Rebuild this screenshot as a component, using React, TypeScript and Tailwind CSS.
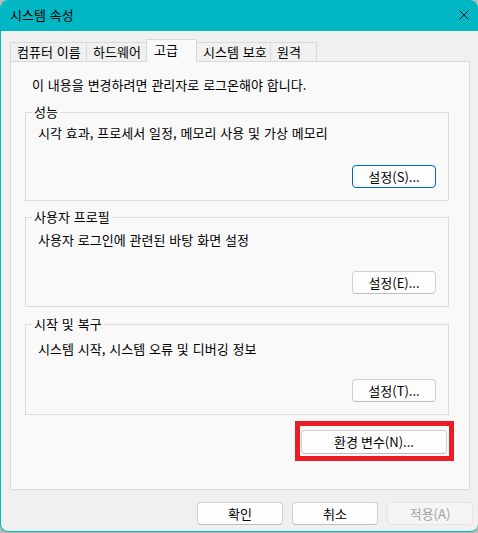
import React from 'react';

const tabs = [
  { label: '컴퓨터 이름', w: 'w-[77px]' },
  { label: '하드웨어', w: 'w-[61px]' },
  { label: '고급', w: 'w-[51px]', active: true },
  { label: '시스템 보호', w: 'w-[75px]' },
  { label: '원격', w: 'w-[47px]' },
];

function Btn({ children, variant = 'normal', className = '' }: { children: React.ReactNode; variant?: 'normal' | 'focus' | 'disabled'; className?: string }) {
  const look =
    variant === 'focus'
      ? 'border-[#0067c0] bg-[#fdfdfd] text-black'
      : variant === 'disabled'
      ? 'border-[#e5e5e5] bg-[#f5f5f5] text-[#a2a2a2]'
      : 'border-[#d0d0d0] border-b-[#bcbcbc] bg-[#fdfdfd] text-black';
  return (
    <button className={`flex items-center justify-center rounded-[4px] border leading-[16px] ${look} ${className}`}>
      {children}
    </button>
  );
}

function Group({ title, text, button, className = '', textMt, btnMt }: { title: string; text: string; button: string; className?: string; textMt: string; btnMt: string }) {
  return (
    <fieldset className={`mr-[20px] border border-[#dcdcdc] pb-[12px] ${className}`}>
      <legend className="ml-[6px] px-[2px] leading-[14px]">{title}</legend>
      <p className={`pl-[12px] leading-[16px] ${textMt}`}>{text}</p>
      <div className={`flex justify-end pr-[12px] ${btnMt}`}>
        <Btn variant={button === '설정(S)...' ? 'focus' : 'normal'} className="w-[84px] h-[23px]">
          {button}
        </Btn>
      </div>
    </fieldset>
  );
}

export default function App() {
  return (
    <div className="w-[478px] h-[533px] bg-[#b9b9b9] text-[13px] text-black [word-spacing:1px] font-['Noto_Sans_CJK_KR','Noto_Sans',sans-serif]">
      <div className="h-[532px] flex flex-col rounded-[8px] overflow-hidden border-l border-b border-[#00b7c3] bg-[#f0f0f0]">
        {/* title bar */}
        <div className="h-[31px] shrink-0 bg-[#00b7c3] flex items-center justify-between pl-[9px] pr-[9px]">
          <span className="leading-[16px] pb-[1px]">시스템 속성</span>
          <svg width="10" height="10" viewBox="0 0 10 10" className="mb-[1px]">
            <path d="M0.5 0.5 L9.5 9.5 M9.5 0.5 L0.5 9.5" stroke="#111" strokeWidth="1" fill="none" />
          </svg>
        </div>

        <div className="flex flex-col pl-[9px] pr-[8px]">
          {/* tabs */}
          <div className="mt-[8px] h-[22px] flex items-end">
            {tabs.map((t, i) =>
              t.active ? (
                <div
                  key={t.label}
                  className={`${t.w} h-[23px] -mb-px relative z-10 -ml-px bg-[#f9f9f9] border border-b-0 border-[#d9d9d9] pl-[7px] pt-[2px] leading-[16px]`}
                >
                  {t.label}
                </div>
              ) : (
                <div
                  key={t.label}
                  className={`${t.w} h-[19px] ${i > 0 ? '-ml-px' : ''} border border-b-0 border-[#d9d9d9] bg-[#f0f0f0] pl-[6px] flex items-center leading-[16px]`}
                >
                  {t.label}
                </div>
              )
            )}
          </div>

          {/* panel */}
          <div className="h-[429px] border border-[#d9d9d9] bg-[#f9f9f9] flex flex-col pl-[14px]">
            <p className="mt-[15px] pl-[7px] leading-[16px]">이 내용을 변경하려면 관리자로 로그온해야 합니다.</p>

            <Group
              className="mt-[12px]"
              title="성능"
              text="시각 효과, 프로세서 일정, 메모리 사용 및 가상 메모리"
              button="설정(S)..."
              textMt="mt-[6px]"
              btnMt="mt-[24px]"
            />
            <Group
              className="mt-[9px]"
              title="사용자 프로필"
              text="사용자 로그인에 관련된 바탕 화면 설정"
              button="설정(E)..."
              textMt="mt-[8px]"
              btnMt="mt-[23px]"
            />
            <Group
              className="mt-[10px]"
              title="시작 및 복구"
              text="시스템 시작, 시스템 오류 및 디버깅 정보"
              button="설정(T)..."
              textMt="mt-[10px]"
              btnMt="mt-[22px]"
            />

            <div className="self-end mr-[15px] mt-[6px] w-[159px] h-[40px] border-[5px] border-[#ec1c24] pl-[1px] pr-[2px] pt-[4px]">
              <Btn className="w-full h-[24px]">환경 변수(N)...</Btn>
            </div>
          </div>

          {/* dialog buttons */}
          <div className="mt-[12px] flex justify-end gap-[9px] mr-[-3px]">
            <Btn className="w-[86px] h-[23px]">확인</Btn>
            <Btn className="w-[86px] h-[23px]">취소</Btn>
            <Btn variant="disabled" className="w-[86px] h-[23px]">적용(A)</Btn>
          </div>
        </div>
      </div>
    </div>
  );
}
